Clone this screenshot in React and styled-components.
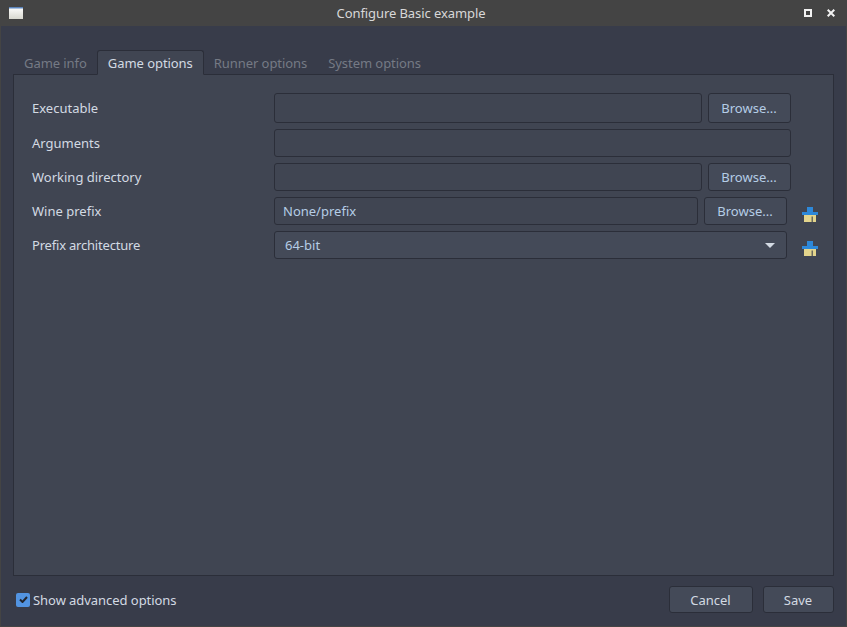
import styled, { createGlobalStyle } from "styled-components";

const Global = createGlobalStyle`
    html, body {
        margin: 0;
        padding: 0;
        background: #383c4a;
    }
    * {
        box-sizing: border-box;
    }
`;

const Window = styled.div`
    width: 847px;
    height: 627px;
    display: flex;
    flex-direction: column;
    overflow: hidden;
    background: #383c4a;
    color: #d3dae3;
    font-family: "Noto Sans", "Open Sans", sans-serif;
    font-size: 13px;
`;

const TitleBar = styled.div`
    height: 26px;
    flex: none;
    display: grid;
    grid-template-columns: auto 1fr 39px;
    align-items: center;
    padding: 0 9px;
    background: #444444;
    color: #d8d8d8;
`;

const Title = styled.span`
    text-align: center;
    letter-spacing: -0.08px;
`;

const WindowControls = styled.div`
    display: flex;
    justify-content: flex-end;
    align-items: center;
    gap: 15px;
    padding-right: 3px;
`;

const Body = styled.div`
    flex: 1;
    display: flex;
    flex-direction: column;
    padding: 24px 12px 13px 12px;
    min-height: 0;
    border: 1px solid #444444;
    border-top: 0;
`;

const TabBar = styled.div`
    height: 25px;
    flex: none;
    display: flex;
    margin-bottom: -1px;
`;

const Tab = styled.div`
    height: 25px;
    padding: 0 10px;
    display: flex;
    align-items: center;
    letter-spacing: -0.06px;
    color: ${(p) => (p.$active ? "#d3dae3" : "#757a85")};
    background: ${(p) => (p.$active ? "#404552" : "transparent")};
    border: 1px solid ${(p) => (p.$active ? "#2b2e39" : "transparent")};
    border-bottom: 1px solid ${(p) => (p.$active ? "#404552" : "transparent")};
    border-radius: 3px 3px 0 0;
    position: relative;
    z-index: 1;
    & + & {
        margin-left: -1px;
    }
`;

const Panel = styled.div`
    flex: 1;
    display: flex;
    flex-direction: column;
    gap: 6px;
    padding: 18px 0 0 18px;
    background: #404552;
    border: 1px solid #2b2e39;
    min-height: 0;
`;

const Row = styled.div`
    display: flex;
    align-items: center;
    height: ${(p) => p.$height || 28}px;
`;

const Label = styled.div`
    width: 242px;
    flex: none;
    color: #d3dae3;
    letter-spacing: ${(p) => (p.$tight ? "-0.2px" : "0")};
`;

const Entry = styled.div`
    width: ${(p) => p.$width}px;
    height: 100%;
    flex: none;
    display: flex;
    align-items: center;
    padding: 0 8px;
    background: #404552;
    border: 1px solid #2b2e39;
    border-radius: 3px;
    color: #b5cde6;
`;

const Button = styled.div`
    width: ${(p) => p.$width}px;
    height: 100%;
    flex: none;
    display: flex;
    align-items: center;
    justify-content: center;
    margin-left: ${(p) => p.$gap || 0}px;
    padding-right: 1px;
    background: #444a58;
    border: 1px solid #2b2e39;
    border-radius: 3px;
    color: ${(p) => p.$color || "#b5cde6"};
`;

const Select = styled(Button)`
    justify-content: space-between;
    padding: 0 11px 0 10px;
    margin-left: 0;
`;

const Caret = styled.div`
    width: 0;
    height: 0;
    border-left: 5px solid transparent;
    border-right: 5px solid transparent;
    border-top: 5px solid #d3dae3;
`;

const ResetIcon = styled.svg`
    margin: 0 0 3px 15px;
    align-self: flex-end;
    flex: none;
    display: block;
`;

const Footer = styled.div`
    flex: none;
    height: 27px;
    margin-top: 10px;
    display: flex;
    align-items: center;
    justify-content: space-between;
    padding-left: 3px;
`;

const CheckRow = styled.div`
    display: flex;
    align-items: center;
    gap: 3px;
    letter-spacing: -0.05px;
`;

const CheckBox = styled.div`
    width: 14px;
    height: 14px;
    border-radius: 2px;
    background: #5294e2;
    display: flex;
    align-items: center;
    justify-content: center;
`;

const FooterButtons = styled.div`
    display: flex;
    gap: 10px;
    height: 27px;
`;

const AppIcon = () => (
    <svg width="14" height="12" viewBox="0 0 14 12" style={{ display: "block" }}>
        <defs>
            <linearGradient id="win" x1="0" y1="0" x2="0" y2="1">
                <stop offset="0" stopColor="#ffffff" />
                <stop offset="1" stopColor="#d8d8d0" />
            </linearGradient>
        </defs>
        <rect width="14" height="12" fill="url(#win)" />
        <rect width="14" height="1" fill="#5b84bb" />
        <rect y="1" width="14" height="1" fill="#a9c0de" />
    </svg>
);

const House = () => (
    <ResetIcon width="16" height="15" viewBox="0 0 16 15">
        <rect x="2" y="8" width="12" height="7" fill="#e3d48c" />
        <rect x="9.5" y="9.5" width="1.5" height="5.5" fill="#6b6a5c" />
        <rect x="0" y="5" width="16" height="3" fill="#2d88d9" />
        <rect x="5" y="0" width="6" height="5" fill="#2d88d9" />
    </ResetIcon>
);

const App = () => {
    return (
        <Window>
            <Global />
            <TitleBar>
                <AppIcon />
                <Title>Configure Basic example</Title>
                <WindowControls>
                    <svg width="8" height="8" viewBox="0 0 8 8">
                        <rect x="1" y="1" width="6" height="6" fill="none" stroke="#f2f2f2" strokeWidth="2" />
                    </svg>
                    <svg width="8" height="8" viewBox="0 0 8 8">
                        <path d="M0.7 0.7 L7.3 7.3 M7.3 0.7 L0.7 7.3" stroke="#f2f2f2" strokeWidth="2" />
                    </svg>
                </WindowControls>
            </TitleBar>
            <Body>
                <TabBar>
                    <Tab>Game info</Tab>
                    <Tab $active>Game options</Tab>
                    <Tab>Runner options</Tab>
                    <Tab>System options</Tab>
                </TabBar>
                <Panel>
                    <Row $height={30}>
                        <Label>Executable</Label>
                        <Entry $width={428} />
                        <Button $width={83} $gap={6}>Browse...</Button>
                    </Row>
                    <Row>
                        <Label>Arguments</Label>
                        <Entry $width={517} />
                    </Row>
                    <Row>
                        <Label>Working directory</Label>
                        <Entry $width={428} />
                        <Button $width={83} $gap={6}>Browse...</Button>
                    </Row>
                    <Row>
                        <Label>Wine prefix</Label>
                        <Entry $width={424}>None/prefix</Entry>
                        <Button $width={83} $gap={6}>Browse...</Button>
                        <House />
                    </Row>
                    <Row>
                        <Label $tight>Prefix architecture</Label>
                        <Select $width={513}>
                            64-bit
                            <Caret />
                        </Select>
                        <House />
                    </Row>
                </Panel>
                <Footer>
                    <CheckRow>
                        <CheckBox>
                            <svg width="9" height="7" viewBox="0 0 9 7">
                                <path d="M1 3.5 L3.5 6 L8 1" fill="none" stroke="#22252d" strokeWidth="2" />
                            </svg>
                        </CheckBox>
                        Show advanced options
                    </CheckRow>
                    <FooterButtons>
                        <Button $width={84} $color="#d3dae3">Cancel</Button>
                        <Button $width={71} $color="#d3dae3">Save</Button>
                    </FooterButtons>
                </Footer>
            </Body>
        </Window>
    );
};

export default App;
